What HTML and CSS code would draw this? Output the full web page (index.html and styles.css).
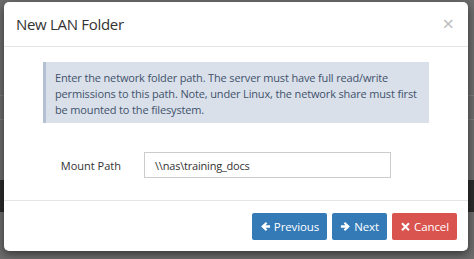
FILE: index.html
```html
<!DOCTYPE html>
<html>
<head>
<meta charset="utf-8">
<link rel="stylesheet" href="styles.css">
</head>
<body>
<div class="backdrop">
  <div class="bg-line l1"></div>
  <div class="bg-line l2"></div>
  <div class="bg-band"></div>
</div>
<div class="modal">
  <div class="modal-header">
    <h4 class="modal-title">New LAN Folder</h4>
    <span class="close">&times;</span>
  </div>
  <div class="modal-body">
    <div class="alert">Enter the network folder path. The server must have full read/write permissions to this path. Note, under Linux, the network share must first be mounted to the filesystem.</div>
    <div class="form-row">
      <label class="label">Mount Path</label>
      <div class="input">\\nas\training_docs</div>
    </div>
  </div>
  <div class="modal-footer">
    <button class="btn btn-primary">
      <svg class="ico" viewBox="0 0 12 12"><path d="M6.4 1.2 L1.2 6 L6.4 10.8 L8 9.2 L6 7.4 H11 V4.6 H6 L8 2.8 Z" fill="#fff"/></svg>Previous</button>
    <button class="btn btn-primary">
      <svg class="ico" viewBox="0 0 12 12"><path d="M5.6 1.2 L10.8 6 L5.6 10.8 L4 9.2 L6 7.4 H1 V4.6 H6 L4 2.8 Z" fill="#fff"/></svg>Next</button>
    <button class="btn btn-danger">
      <svg class="ico" viewBox="0 0 12 12"><path d="M3 1.6 L6 4.6 L9 1.6 L10.6 3.2 L7.6 6.2 L10.6 9.2 L9 10.8 L6 7.8 L3 10.8 L1.4 9.2 L4.4 6.2 L1.4 3.2 Z" fill="#fff"/></svg>Cancel</button>
  </div>
</div>
</body>
</html>
```
FILE: styles.css
```css
html, body {
  margin: 0;
  padding: 0;
}
body {
  width: 474px;
  height: 259px;
  overflow: hidden;
  background: #6c6c6c;
  font-family: "Open Sans", "Noto Sans", sans-serif;
  position: relative;
}
.backdrop {
  position: absolute;
  inset: 0;
}
.bg-line {
  position: absolute;
  left: 0;
  right: 0;
  height: 1px;
  background: #7d7d7d;
}
.l1 { top: 95px; }
.l2 { top: 119px; }
.bg-band {
  position: absolute;
  left: 0;
  right: 0;
  top: 180px;
  height: 32px;
  background: #2b2b2b;
}
.modal {
  position: absolute;
  left: 4px;
  top: 2px;
  width: 464px;
  height: 249px;
  background: #fff;
  border-radius: 5px;
  box-shadow: 0 3px 8px rgba(0,0,0,0.5);
  display: flex;
  flex-direction: column;
}
.modal-header {
  height: 44px;
  border-bottom: 1px solid #e5e5e5;
  display: flex;
  align-items: center;
  justify-content: space-between;
  padding: 0 14px 0 12px;
}
.modal-title {
  margin: 0;
  font-size: 15px;
  letter-spacing: -0.3px;
  font-weight: 400;
  color: #333;
}
.close {
  font-size: 20px;
  color: #bbb;
  line-height: 1;
}
.modal-body {
  flex: 1;
  padding: 15px 39px 0 39px;
}
.alert {
  background: #d9e0ea;
  border-left: 3px solid #b3c0d1;
  color: #42526a;
  font-size: 11px;
  letter-spacing: -0.15px;
  line-height: 16px;
  padding: 8px 10px 5px 9px;
}
.form-row {
  display: flex;
  align-items: center;
  margin-top: 29px;
}
.label {
  width: 78px;
  text-align: right;
  font-size: 11px;
  color: #333;
}
.input {
  box-sizing: border-box;
  margin-left: 23px;
  width: 247px;
  height: 26px;
  border: 1px solid #ccc;
  font-size: 11px;
  letter-spacing: -0.2px;
  color: #333;
  display: flex;
  align-items: center;
  padding-left: 10px;
}
.modal-footer {
  border-top: 1px solid #e5e5e5;
  height: 50px;
  display: flex;
  align-items: center;
  justify-content: flex-end;
  gap: 5px;
  padding-right: 11px;
}
.btn {
  height: 27px;
  border: none;
  border-radius: 2px;
  color: #fff;
  font-family: "Open Sans", "Noto Sans", sans-serif;
  font-size: 11.5px;
  letter-spacing: -0.1px;
  display: flex;
  align-items: center;
  padding: 0 8px;
}
.btn-primary { background: #337ab7; }
.btn-danger { background: #d9534f; }
.ico {
  width: 11px;
  height: 11px;
  margin-right: 3px;
}
```
